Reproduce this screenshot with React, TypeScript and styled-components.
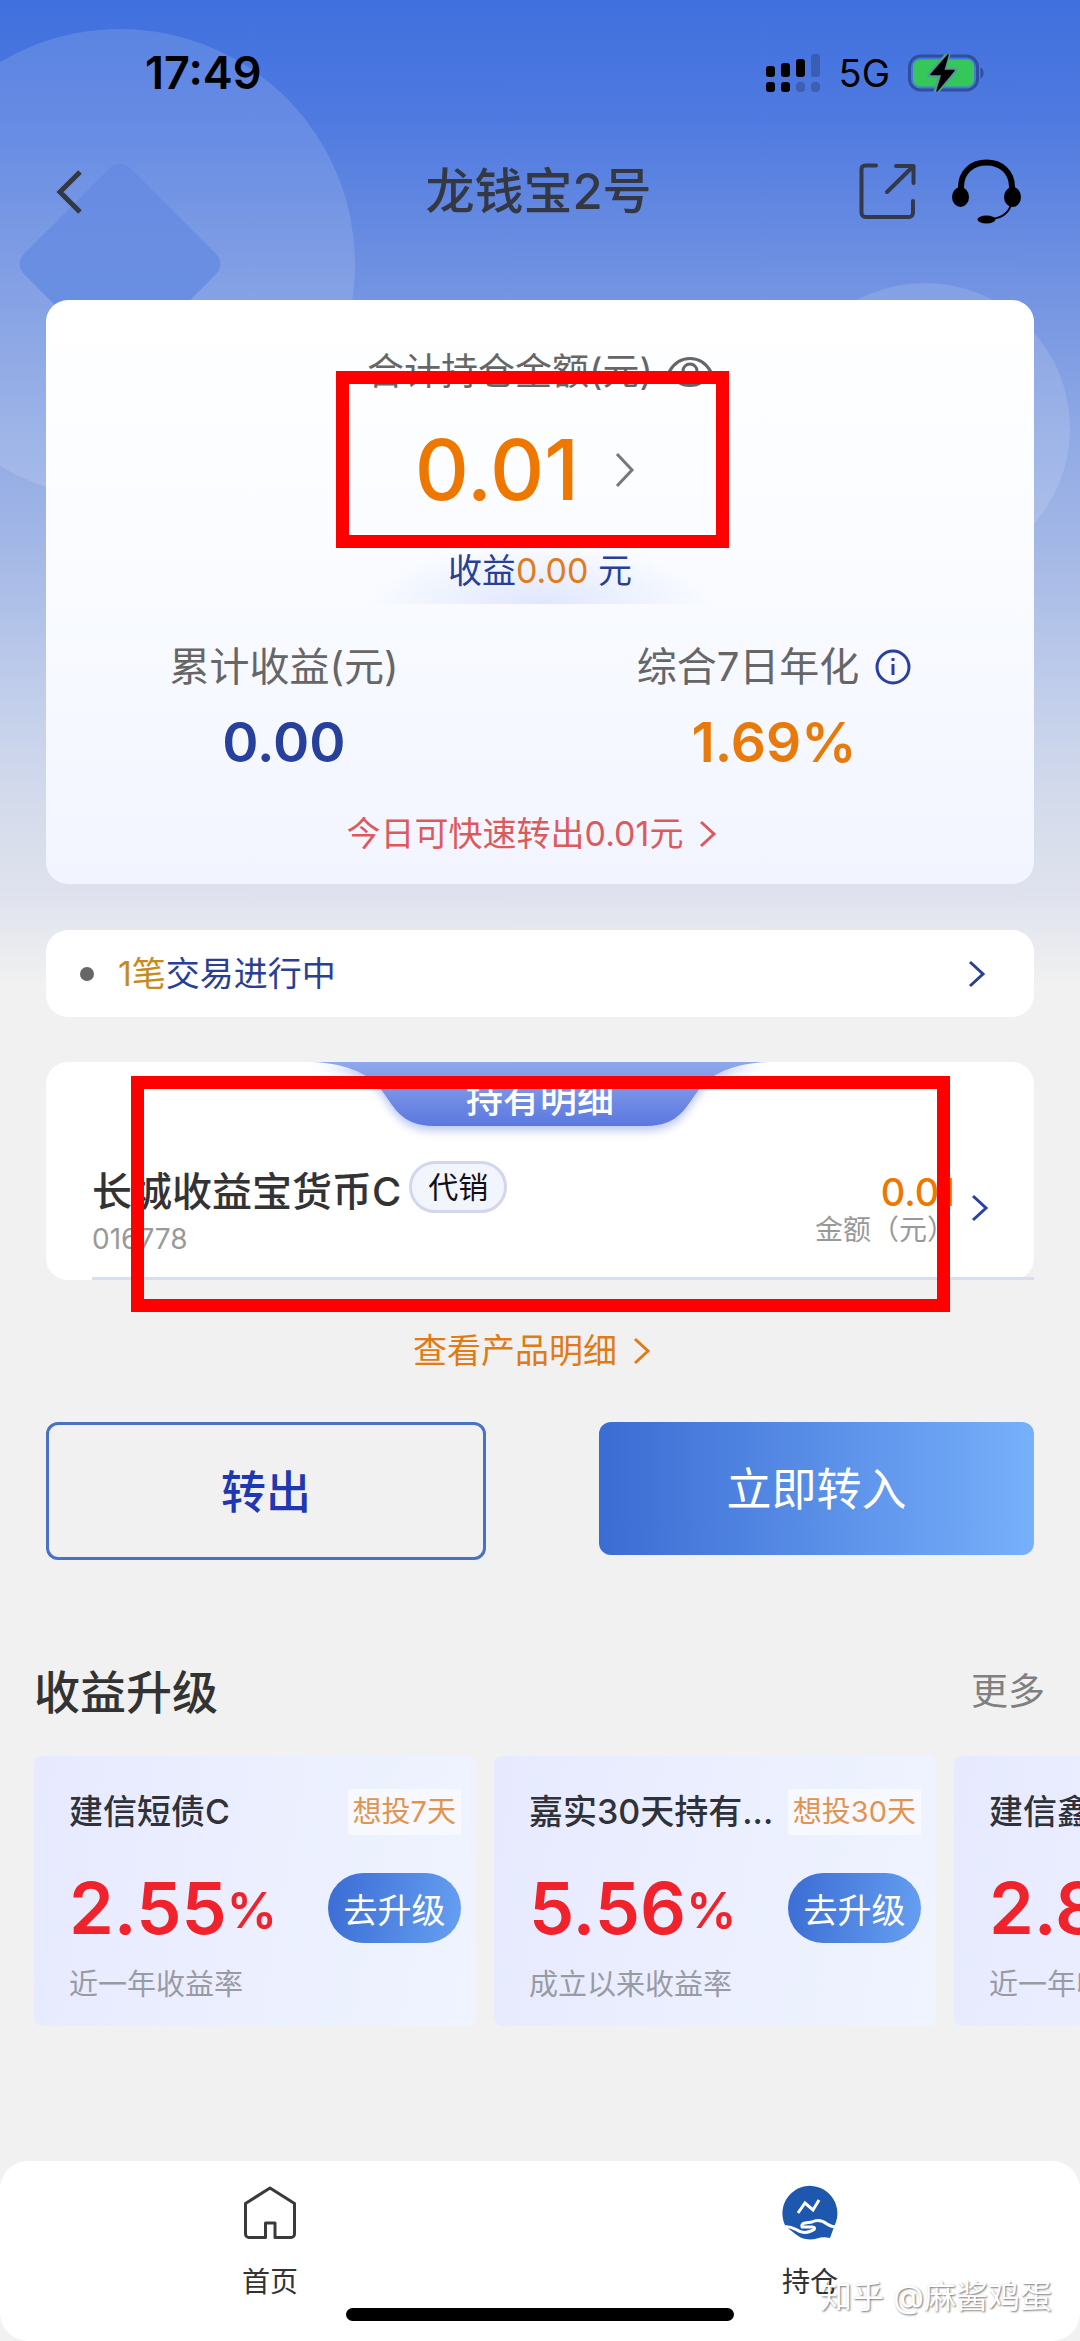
import React from "react";
import styled, { createGlobalStyle } from "styled-components";

const GlobalStyle = createGlobalStyle`
  *, *::before, *::after { box-sizing: border-box; }
  html, body { margin: 0; padding: 0; }
  body {
    background: #f1f1f1;
    color: #333;
    font-family: Inter, "Noto Sans CJK SC", sans-serif;
    overflow-x: hidden;
  }
  button, a { font: inherit; color: inherit; text-decoration: none; }
  button { background: none; border: 0; padding: 0; cursor: pointer; }
  h1, h2, h3, p { margin: 0; font-weight: inherit; }
`;

const Page = styled.div`
  position: relative;
  display: flex;
  flex-direction: column;
  min-height: 100vh;
  overflow: hidden;
  background: linear-gradient(
      #4070de 0px,
      #4f7ae0 120px,
      #6489e1 220px,
      #7595e2 300px,
      #8fa9e5 430px,
      #a8bbe7 570px,
      #c4d0eb 710px,
      #d4dbeb 806px,
      #e0e3ee 900px,
      #f1f1f1 985px
    )
    no-repeat #f1f1f1;
  background-size: 100% 985px;
`;

const Backdrop = styled.svg<{ $side: "left" | "right" }>`
  position: absolute;
  top: 0;
  ${(p) => p.$side}: 0;
`;

const StatusBar = styled.div`
  position: relative;
  display: flex;
  align-items: center;
  justify-content: space-between;
  height: 146px;
  padding: 0 94px 0 145px;
  color: #000;
`;

const Clock = styled.span`
  font-size: 45px;
  font-weight: 600;
  line-height: 56px;
`;

const StatusIcons = styled.div`
  display: flex;
  align-items: center;
  gap: 18px;
`;

const Network = styled.span`
  font-size: 38px;
  line-height: 44px;
`;

const NavBar = styled.header`
  position: relative;
  display: grid;
  grid-template-columns: 1fr auto 1fr;
  align-items: center;
  height: 92px;
  padding: 0 59px 0 56px;
`;

const NavTitle = styled.h1`
  font-size: 49px;
  font-weight: 500;
  line-height: 64px;
  color: #333842;
`;

const NavActions = styled.div`
  display: flex;
  justify-content: flex-end;
  align-items: center;
  gap: 36px;
  padding-bottom: 2px;
`;

const IconButton = styled.button`
  display: flex;
  justify-self: start;
`;

const Main = styled.main`
  position: relative;
  padding: 62px 46px 0;
`;

const SummaryCard = styled.section`
  position: relative;
  display: flex;
  flex-direction: column;
  align-items: center;
  padding: 48px 0 26px;
  border-radius: 22px;
  background: linear-gradient(#fff, #fafcff 40%, #f2f5ff);
`;

const TotalLabel = styled.div`
  display: flex;
  align-items: center;
  gap: 14px;
  font-size: 37px;
  line-height: 48px;
  color: #666;
`;

const TotalAmount = styled.button`
  display: flex;
  align-items: center;
  gap: 36px;
  margin-top: 26px;
  padding-right: 30px;
  font-size: 84px;
  font-weight: 500;
  line-height: 96px;
  color: #ee7700;
`;

const EarningsPill = styled.p`
  width: 340px;
  height: 58px;
  margin-top: 28px;
  text-align: center;
  font-size: 34px;
  line-height: 50px;
  color: #2a3f94;
  background: radial-gradient(closest-side, #e0e7fd, #edf2fe 55%, rgba(246, 249, 255, 0)) 50% 0 / 100% 200%;
`;

const Accent = styled.span<{ $color: string }>`
  color: ${(p) => p.$color};
`;

const Stats = styled.div`
  display: grid;
  grid-template-columns: 1fr 1fr;
  gap: 14px;
  align-self: stretch;
  margin-top: 38px;
  padding-right: 22px;
`;

const Stat = styled.div`
  display: flex;
  flex-direction: column;
  align-items: center;
`;

const StatLabel = styled.div`
  display: flex;
  align-items: center;
  gap: 16px;
  font-size: 40px;
  line-height: 50px;
  color: #666;
`;

const StatValue = styled.div<{ $color: string }>`
  margin-top: 18px;
  font-size: 55px;
  font-weight: 600;
  line-height: 64px;
  color: ${(p) => p.$color};
`;

const TextLink = styled.a<{ $color: string; $top: number }>`
  display: flex;
  align-items: center;
  justify-content: center;
  gap: 16px;
  margin-top: ${(p) => p.$top}px;
  padding-right: 16px;
  font-size: 34px;
  line-height: 48px;
  color: ${(p) => p.$color};
`;

const PendingRow = styled.a`
  display: flex;
  align-items: center;
  height: 87px;
  margin-top: 46px;
  padding: 0 48px 0 34px;
  border-radius: 22px;
  background: #fff;
  font-size: 34px;
  line-height: 48px;
  color: #2a3f94;
`;

const Dot = styled.span`
  width: 14px;
  height: 14px;
  margin-right: 24px;
  border-radius: 50%;
  background: #666;
`;

const PendingText = styled.span`
  flex: 1;
`;

const HoldingCard = styled.section`
  position: relative;
  margin-top: 45px;
  border-radius: 22px;
  background: #fff;
`;

const HoldingTab = styled.div`
  position: relative;
  height: 66px;
`;

const HoldingTabShape = styled.svg`
  display: block;
  margin: 0 auto;
  overflow: visible;
`;

const HoldingTabTitle = styled.h2`
  position: absolute;
  inset: 14px 0 0;
  text-align: center;
  font-size: 37px;
  font-weight: 500;
  line-height: 48px;
  color: #fff;
`;

const HoldingRow = styled.a`
  display: flex;
  align-items: center;
  gap: 16px;
  margin-left: 46px;
  padding: 33px 45px 22px 0;
  border-bottom: 3px solid #d5dff0;
`;

const HoldingInfo = styled.div`
  flex: 1;
`;

const HoldingName = styled.h3`
  display: flex;
  align-items: flex-start;
  gap: 8px;
  font-size: 40px;
  font-weight: 500;
  line-height: 62px;
  color: #333;
`;

const Badge = styled.span`
  padding: 0 16px;
  border: 3px solid #d3d6ec;
  border-radius: 26px;
  background: #f3f5fd;
  font-size: 30px;
  font-weight: 400;
  line-height: 46px;
  color: #111;
`;

const HoldingCode = styled.p`
  font-size: 28px;
  line-height: 32px;
  color: #999;
`;

const HoldingAmount = styled.div`
  display: flex;
  flex-direction: column;
  align-items: flex-end;
  font-size: 28px;
  line-height: 32px;
  color: #999;
`;

const HoldingValue = styled.span`
  font-size: 38px;
  font-weight: 500;
  line-height: 44px;
  color: #ee7700;
`;

const Actions = styled.div`
  display: grid;
  grid-template-columns: 440fr 435fr;
  align-items: start;
  gap: 113px;
  margin-top: 47px;
`;

const ActionButton = styled.button`
  padding-bottom: 4px;
  border-radius: 12px;
  font-size: 45px;
`;

const OutButton = styled(ActionButton)`
  height: 138px;
  border: 3px solid #4a72c4;
  font-weight: 500;
  color: #1f37b0;
`;

const InButton = styled(ActionButton)`
  height: 133px;
  background: linear-gradient(90deg, #3b6cd3, #77b0fb);
  color: #fff;
`;

const Upgrade = styled.section`
  position: relative;
  margin-top: 100px;
  padding: 0 0 0 34px;
`;

const UpgradeHead = styled.div`
  display: flex;
  align-items: center;
  justify-content: space-between;
  padding-right: 35px;
  line-height: 64px;
`;

const UpgradeTitle = styled.h2`
  font-size: 46px;
  font-weight: 500;
  color: #333;
`;

const MoreLink = styled.a`
  font-size: 37px;
  color: #808080;
`;

const ProductStrip = styled.div`
  display: flex;
  gap: 18px;
  margin-top: 32px;
  overflow: hidden;
`;

const ProductCard = styled.article`
  flex: 0 0 442px;
  padding: 32px 15px 23px 35px;
  border-radius: 8px;
  background: linear-gradient(100deg, #e7eafe, #eff4ff);
`;

const ProductLine = styled.div<{ $top?: number }>`
  display: flex;
  align-items: center;
  justify-content: space-between;
  margin-top: ${(p) => p.$top ?? 0}px;
`;

const ProductName = styled.h3`
  white-space: nowrap;
  font-size: 34px;
  font-weight: 500;
  line-height: 48px;
  color: #2f3238;
`;

const Tag = styled.span`
  flex: none;
  padding: 0 5px;
  background: #f8f9ff;
  font-size: 29px;
  line-height: 46px;
  color: #e0944f;
`;

const Rate = styled.p`
  font-size: 72px;
  font-weight: 600;
  line-height: 72px;
  color: #f0222b;
`;

const Percent = styled.span`
  font-size: 50px;
  vertical-align: 6px;
  line-height: 52px;
`;

const UpgradeButton = styled.button`
  width: 133px;
  height: 70px;
  border-radius: 35px;
  background: linear-gradient(100deg, #3b6cd3, #66a0f2);
  font-size: 34px;
  color: #fff;
`;

const Caption = styled.p`
  margin-top: 23px;
  font-size: 29px;
  line-height: 36px;
  white-space: nowrap;
  color: #999ba4;
`;

const TabBar = styled.nav`
  position: relative;
  display: grid;
  grid-template-columns: 1fr 1fr;
  height: 180px;
  margin-top: auto;
  padding-top: 23px;
  border-radius: 28px;
  background: #fff;
`;

const TabItem = styled.a`
  display: flex;
  flex-direction: column;
  align-items: center;
  gap: 22px;
  font-size: 28px;
  line-height: 40px;
  color: #333;
`;

const HomeIndicator = styled.div`
  position: absolute;
  left: 50%;
  bottom: 20px;
  width: 388px;
  height: 13px;
  margin-left: -194px;
  border-radius: 7px;
  background: #000;
`;

const Watermark = styled.span`
  position: absolute;
  right: 28px;
  bottom: 22px;
  font-size: 32px;
  line-height: 44px;
  color: #fff;
  text-shadow: 1px 1px 2px rgba(0, 0, 0, 0.55);
`;

const Highlight = styled.div<{ $left: string; $right: string; $top: number; $height: number }>`
  position: absolute;
  left: ${(p) => p.$left};
  right: ${(p) => p.$right};
  top: ${(p) => p.$top}px;
  height: ${(p) => p.$height}px;
  border: 13px solid #fe0000;
  pointer-events: none;
`;

function Chevron({ w = 18, h = 28, color = "currentColor" }: { w?: number; h?: number; color?: string }) {
  return (
    <svg width={w} height={h} viewBox={`0 0 ${w} ${h}`} fill="none" stroke={color} strokeWidth="3" aria-hidden="true">
      <path d={`M2 2L${w - 3} ${h / 2}L2 ${h - 2}`} />
    </svg>
  );
}

function SignalIcon() {
  return (
    <svg width="55" height="38" viewBox="0 0 55 38" aria-hidden="true">
      <rect x="0" y="12" width="9" height="11" rx="3" />
      <rect x="15" y="9" width="9" height="14" rx="3" />
      <rect x="30" y="5" width="9" height="18" rx="3" />
      <rect x="45" y="0" width="9" height="23" rx="3" opacity=".2" />
      <rect x="0" y="28" width="9" height="10" rx="3" />
      <rect x="15" y="28" width="9" height="10" rx="3" />
      <rect x="30" y="28" width="9" height="10" rx="4" opacity=".2" />
      <rect x="45" y="28" width="9" height="10" rx="4" opacity=".2" />
    </svg>
  );
}

function BatteryIcon() {
  return (
    <svg width="78" height="38" viewBox="0 0 78 38" aria-hidden="true">
      <rect x="1.5" y="2" width="68" height="34" rx="11" fill="none" stroke="#2f4f9e" strokeWidth="3" />
      <rect x="5" y="5.5" width="61" height="27" rx="7" fill="#35c759" />
      <path d="M72.5 13.5c4 1.5 4 9.5 0 11z" fill="#2f4f9e" />
      <path d="M40 0L22 21h11l-5 17L47 16H36z" fill="#000" stroke="#4f9c9a" strokeWidth="5" strokeLinejoin="round" />
      <path d="M40 1L23 20.5h11L29 37L46 16.5H35.5z" fill="#000" stroke="#000" strokeWidth="1.5" strokeLinejoin="round" />
    </svg>
  );
}

function ShareIcon() {
  return (
    <svg width="57" height="57" viewBox="0 0 57 57" fill="none" stroke="#33394a" strokeWidth="4" strokeLinecap="round" strokeLinejoin="round" aria-hidden="true">
      <path d="M17 2.5H6a3.5 3.5 0 0 0-3.5 3.5v44a4 4 0 0 0 4 4H50a4 4 0 0 0 4-4V38" />
      <path d="M37 3h17.5v17M54 3.5L28 29" />
    </svg>
  );
}

function HeadsetIcon() {
  return (
    <svg width="69" height="65" viewBox="0 0 69 65" aria-hidden="true">
      <path d="M9 34V28C9 13 20 3.5 34.5 3.5S60 13 60 28v6" fill="none" stroke="#000" strokeWidth="6" />
      <ellipse cx="8.5" cy="38" rx="8.5" ry="10" />
      <ellipse cx="60.5" cy="38" rx="8.5" ry="10" />
      <path d="M59 46c-3 9-9 13-20 14" fill="none" stroke="#000" strokeWidth="2" />
      <ellipse cx="34.5" cy="60.5" rx="9" ry="4" />
    </svg>
  );
}

function EyeIcon() {
  return (
    <svg width="46" height="32" viewBox="0 0 46 32" fill="none" stroke="#666" strokeWidth="3" aria-hidden="true">
      <path d="M2 16C12-2 34-2 44 16C34 34 12 34 2 16z" />
      <circle cx="23" cy="15" r="7" />
    </svg>
  );
}

function InfoIcon() {
  return (
    <svg width="36" height="36" viewBox="0 0 36 36" fill="none" stroke="#2a3fa0" strokeWidth="3" aria-hidden="true">
      <circle cx="18" cy="18" r="16" />
      <path d="M18 15v11M18 9v3" />
    </svg>
  );
}

function HomeIcon() {
  return (
    <svg width="56" height="56" viewBox="0 0 56 56" fill="none" stroke="#3a3a3a" strokeWidth="3" strokeLinejoin="round" aria-hidden="true">
      <path d="M28 4L52.5 19.5V50a3.5 3.5 0 0 1-3.5 3.5H33V39H23.5V53.5H7A3.5 3.5 0 0 1 3.5 50V19.5z" />
    </svg>
  );
}

function HoldIcon() {
  return (
    <svg width="56" height="56" viewBox="0 0 56 56" fill="none" aria-hidden="true">
      <path d="M4 43A27.5 27.5 0 1 1 54 38L52 43L48 54C38 51 33 57 24 55C16 54 12 48 4 43z" fill="#1d57ae" />
      <path d="M16 29L23 19L31 26L37 16" stroke="#fff" strokeWidth="3" />
      <path
        d="M2 43C8 42 11 44 15 46C19 49 24 49 29 47C33 46 34 43 30 43H20C19 38 25 39 30 38C36 35 41 37 45 40C48 42 51 43 55 43"
        stroke="#fff"
        strokeWidth="3"
        strokeLinejoin="round"
      />
    </svg>
  );
}

const products = [
  { name: "建信短债C", tag: "想投7天", rate: "2.55", caption: "近一年收益率" },
  { name: "嘉实30天持有...", tag: "想投30天", rate: "5.56", caption: "成立以来收益率" },
  { name: "建信鑫享短债", tag: "想投7天", rate: "2.87", caption: "近一年收益率" },
];

export default function App() {
  return (
    <>
      <GlobalStyle />
      <Page>
        <Backdrop $side="left" width="360" height="500" viewBox="0 0 360 500" aria-hidden="true">
          <defs>
            <linearGradient id="diamondFill" x1="0" y1="0" x2="1" y2="1">
              <stop offset="0" stopColor="#5a82de" stopOpacity=".4" />
              <stop offset="1" stopColor="#5a86e2" stopOpacity=".8" />
            </linearGradient>
          </defs>
          <circle cx="120" cy="264" r="235" fill="#fff" opacity=".13" />
          <rect x="45" y="189" width="150" height="150" rx="14" transform="rotate(45 120 264)" fill="url(#diamondFill)" />
        </Backdrop>
        <Backdrop $side="right" width="300" height="600" viewBox="0 0 300 600" aria-hidden="true">
          <circle cx="145" cy="428" r="145" fill="#fff" opacity=".13" />
        </Backdrop>

        <StatusBar>
          <Clock>17:49</Clock>
          <StatusIcons>
            <SignalIcon />
            <Network>5G</Network>
            <BatteryIcon />
          </StatusIcons>
        </StatusBar>

        <NavBar>
          <IconButton aria-label="返回">
            <svg width="26" height="44" viewBox="0 0 26 44" fill="none" stroke="#333842" strokeWidth="5" aria-hidden="true">
              <path d="M24 2L4 22L24 42" />
            </svg>
          </IconButton>
          <NavTitle>龙钱宝2号</NavTitle>
          <NavActions>
            <IconButton aria-label="分享"><ShareIcon /></IconButton>
            <IconButton aria-label="客服"><HeadsetIcon /></IconButton>
          </NavActions>
        </NavBar>

        <Main>
          <SummaryCard>
            <TotalLabel>
              合计持仓金额(元)
              <IconButton aria-label="隐藏金额"><EyeIcon /></IconButton>
            </TotalLabel>
            <TotalAmount>
              0.01
              <Chevron w={20} h={36} color="#777" />
            </TotalAmount>
            <EarningsPill>
              收益<Accent $color="#e07b22">0.00</Accent> 元
            </EarningsPill>
            <Stats>
              <Stat>
                <StatLabel>累计收益(元)</StatLabel>
                <StatValue $color="#27409b">0.00</StatValue>
              </Stat>
              <Stat>
                <StatLabel>
                  综合7日年化
                  <IconButton aria-label="说明"><InfoIcon /></IconButton>
                </StatLabel>
                <StatValue $color="#e87a0c">1.69%</StatValue>
              </Stat>
            </Stats>
            <TextLink href="#transfer" $color="#dd5a5c" $top={36}>
              今日可快速转出0.01元
              <Chevron />
            </TextLink>
            <Highlight $left="290px" $right="305px" $top={71} $height={177} />
          </SummaryCard>

          <PendingRow href="#pending">
            <Dot />
            <PendingText><Accent $color="#c98a1c">1笔</Accent>交易进行中</PendingText>
            <Chevron />
          </PendingRow>

          <HoldingCard>
            <HoldingTab>
              <HoldingTabShape width="456" height="64" viewBox="0 0 456 64" aria-hidden="true">
                <defs>
                  <linearGradient id="tabFill" x1="0" y1="0" x2="0" y2="1">
                    <stop offset="0" stopColor="#8fa8ec" />
                    <stop offset="1" stopColor="#5b78df" />
                  </linearGradient>
                  <filter id="tabShadow" x="-10%" y="0%" width="120%" height="150%">
                    <feDropShadow dx="0" dy="5" stdDeviation="4" floodColor="#5b78df" floodOpacity=".4" />
                  </filter>
                </defs>
                <path
                  d="M0 0H456C426 1 401 10 388 26C374 44 368 64 334 64H122C88 64 82 44 68 26C55 10 30 1 0 0z"
                  fill="url(#tabFill)"
                  filter="url(#tabShadow)"
                />
              </HoldingTabShape>
              <HoldingTabTitle>持有明细</HoldingTabTitle>
            </HoldingTab>
            <HoldingRow href="#016778">
              <HoldingInfo>
                <HoldingName>
                  长城收益宝货币C
                  <Badge>代销</Badge>
                </HoldingName>
                <HoldingCode>016778</HoldingCode>
              </HoldingInfo>
              <HoldingAmount>
                <HoldingValue>0.01</HoldingValue>
                金额（元）
              </HoldingAmount>
              <Chevron color="#2a3fa8" />
            </HoldingRow>
            <Highlight $left="85px" $right="84px" $top={14} $height={236} />
          </HoldingCard>

          <TextLink href="#products" $color="#e07b16" $top={47}>
            查看产品明细
            <Chevron />
          </TextLink>

          <Actions>
            <OutButton>转出</OutButton>
            <InButton>立即转入</InButton>
          </Actions>
        </Main>

        <Upgrade>
          <UpgradeHead>
            <UpgradeTitle>收益升级</UpgradeTitle>
            <MoreLink href="#more">更多</MoreLink>
          </UpgradeHead>
          <ProductStrip>
            {products.map((p) => (
              <ProductCard key={p.name}>
                <ProductLine>
                  <ProductName>{p.name}</ProductName>
                  <Tag>{p.tag}</Tag>
                </ProductLine>
                <ProductLine $top={36}>
                  <Rate>{p.rate}<Percent>%</Percent></Rate>
                  <UpgradeButton>去升级</UpgradeButton>
                </ProductLine>
                <Caption>{p.caption}</Caption>
              </ProductCard>
            ))}
          </ProductStrip>
        </Upgrade>

        <TabBar>
          <TabItem href="#home"><HomeIcon />首页</TabItem>
          <TabItem href="#hold"><HoldIcon />持仓</TabItem>
          <HomeIndicator />
          <Watermark>知乎 @麻酱鸡蛋</Watermark>
        </TabBar>
      </Page>
    </>
  );
}
